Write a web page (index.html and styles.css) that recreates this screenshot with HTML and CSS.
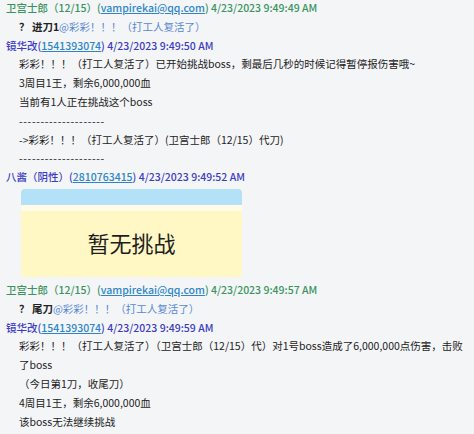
FILE: index.html
```html
<!DOCTYPE html>
<html lang="zh-CN">
<head>
    <meta charset="UTF-8">
    <title>聊天记录</title>
    <link rel="stylesheet" href="styles.css">
</head>
<body>
    <div class="log">
        <div class="msg">
            <div class="head green">卫宫士郎（12/15）(<a href="#">vampirekai@qq.com</a>) 4/23/2023 9:49:49 AM</div>
            <div class="text"><b>？ 进刀1</b><span class="at">@彩彩！！！（打工人复活了）</span></div>
        </div>
        <div class="msg">
            <div class="head purple">镜华改(<a href="#">1541393074</a>) 4/23/2023 9:49:50 AM</div>
            <div class="text">彩彩！！！（打工人复活了）已开始挑战boss，剩最后几秒的时候记得暂停报伤害哦~</div>
            <div class="text">3周目1王，剩余6,000,000血</div>
            <div class="text">当前有1人正在挑战这个boss</div>
            <div class="text sep">--------------------</div>
            <div class="text">-&gt;彩彩！！！（打工人复活了）(卫宫士郎（12/15）代刀)</div>
            <div class="text sep">--------------------</div>
        </div>
        <div class="msg">
            <div class="head purple">八酱（阴性）(<a href="#">2810763415</a>) 4/23/2023 9:49:52 AM</div>
            <div class="card">
                <div class="card-top"></div>
                <div class="card-body">暂无挑战</div>
            </div>
        </div>
        <div class="msg">
            <div class="head green">卫宫士郎（12/15）(<a href="#">vampirekai@qq.com</a>) 4/23/2023 9:49:57 AM</div>
            <div class="text"><b>？ 尾刀</b><span class="at">@彩彩！！！（打工人复活了）</span></div>
        </div>
        <div class="msg">
            <div class="head purple">镜华改(<a href="#">1541393074</a>) 4/23/2023 9:49:59 AM</div>
            <div class="text">彩彩！！！（打工人复活了）（卫宫士郎（12/15）代）对1号boss造成了6,000,000点伤害，击败<br>了boss</div>
            <div class="text">（今日第1刀，收尾刀）</div>
            <div class="text">4周目1王，剩余6,000,000血</div>
            <div class="text">该boss无法继续挑战</div>
        </div>
    </div>
</body>
</html>
```

FILE: styles.css
```css
body {
    margin: 0;
    padding: 0;
    background-color: #f4f5f7;
    font-family: "Noto Sans CJK SC", "Noto Sans", sans-serif;
    font-size: 10.5px;
    line-height: 18.8px;
    color: #222;
}

.log {
    margin-top: -1px;
    padding: 0 4px 0 6px;
}

.head {
    font-weight: 500;
}

.head a {
    color: #2e86c8;
    text-decoration: underline;
}

.green {
    color: #3a9460;
}

.purple {
    color: #3c3cc4;
}

.text {
    padding-left: 13px;
}

.text b {
    font-weight: 700;
}

.sep {
    letter-spacing: 0.65px;
}

.at {
    color: #5688d4;
}

.card {
    width: 221px;
    height: 88px;
    margin: 2px 0 4px 15px;
    border-radius: 4px;
    overflow: hidden;
    display: flex;
    flex-direction: column;
    background-color: #fff7c4;
}

.card-top {
    height: 16px;
    background-color: #b2e1f8;
    border-bottom: 6px solid #fffbe6;
}

.card-body {
    flex: 1;
    display: flex;
    align-items: center;
    justify-content: center;
    font-size: 22px;
    color: #1e1e1e;
    padding-bottom: 4px;
}
```
